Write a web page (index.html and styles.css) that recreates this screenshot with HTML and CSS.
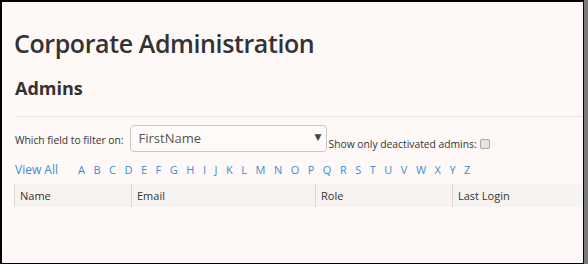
FILE: index.html
```html
<!DOCTYPE html>
<html>
<head>
<meta charset="utf-8">
<link rel="stylesheet" href="styles.css">
</head>
<body>
<div class="frame">
  <h1 class="title">Corporate Administration</h1>
  <h2 class="subtitle">Admins</h2>
  <div class="rule"></div>
  <div class="filters">
    <span class="label">Which field to filter on:</span>
    <div class="select"><span>FirstName</span><span class="arrow">&#9660;</span></div>
    <span class="label deact">Show only deactivated admins:</span>
    <span class="check"></span>
  </div>
  <div class="letters">
    <a class="viewall">View All</a>
    <a>A</a><a>B</a><a>C</a><a>D</a><a>E</a><a>F</a><a>G</a><a>H</a><a>I</a><a>J</a><a>K</a><a>L</a><a>M</a><a>N</a><a>O</a><a>P</a><a>Q</a><a>R</a><a>S</a><a>T</a><a>U</a><a>V</a><a>W</a><a>X</a><a>Y</a><a>Z</a>
  </div>
  <table class="grid">
    <tr>
      <th class="c1">Name</th>
      <th class="c2">Email</th>
      <th class="c3">Role</th>
      <th class="c4">Last Login</th>
    </tr>
  </table>
</div>
</body>
</html>
```
FILE: styles.css
```css
html, body {
  margin: 0;
  padding: 0;
  background: #7b7b7b;
}
body {
  width: 588px;
  height: 264px;
  overflow: hidden;
  font-family: "Open Sans", "DejaVu Sans", sans-serif;
  color: #333;
}
.frame {
  box-sizing: border-box;
  width: 584px;
  height: 264px;
  border: 1px solid #000;
  border-left-width: 2px;
  border-top-width: 2px;
  background: #fef9f6;
  padding: 0 0 0 13px;
}
.title {
  margin: 0 0 0 -1px;
  padding-top: 25px;
  font-size: 25px;
  line-height: 32px;
  font-weight: 600;
  letter-spacing: -0.4px;
  color: #333;
}
.subtitle {
  margin: 0;
  padding-top: 17px;
  font-size: 18px;
  line-height: 24px;
  font-weight: 700;
  color: #333;
}
.rule {
  margin-top: 16px;
  height: 1px;
  background: #e6e2df;
}
.filters {
  display: flex;
  align-items: center;
  margin-top: 8px;
  height: 26px;
}
.label {
  font-size: 10.3px;
  color: #333;
  padding-top: 4px;
}
.select {
  box-sizing: border-box;
  width: 197px;
  height: 27px;
  margin-left: 6px;
  border: 1px solid #c9c6c3;
  border-radius: 4px;
  background: #fefaf7;
  display: flex;
  align-items: center;
  justify-content: space-between;
  padding: 0 4px 0 8px;
  font-size: 13px;
  color: #555;
}
.arrow {
  font-size: 9px;
  color: #444;
  margin-bottom: 3px;
}
.deact {
  margin-left: 2px;
  padding-top: 12px;
}
.check {
  box-sizing: border-box;
  width: 10px;
  height: 10px;
  margin-left: 3px;
  margin-top: 12px;
  border: 1px solid #a9a9a9;
  border-radius: 2px;
  background: #e4e4e4;
}
.letters {
  display: flex;
  align-items: baseline;
  margin-top: 10px;
  height: 20px;
}
.letters a {
  color: #3a8dd2;
  font-size: 11px;
  margin-right: 8.5px;
}
.letters a.viewall {
  font-size: 12px;
  margin-right: 20px;
}
.grid {
  border-collapse: collapse;
  margin-top: 3px;
  margin-left: -1px;
  width: 569px;
  background: #f6f3f0;
}
.grid th {
  height: 23px;
  padding: 0 0 0 5px;
  text-align: left;
  font-weight: 400;
  font-size: 11px;
  color: #333;
  border-left: 1px solid #dcd8d5;
}
.c1 { width: 111px; }
.c2 { width: 178px; }
.c3 { width: 131px; }
```
